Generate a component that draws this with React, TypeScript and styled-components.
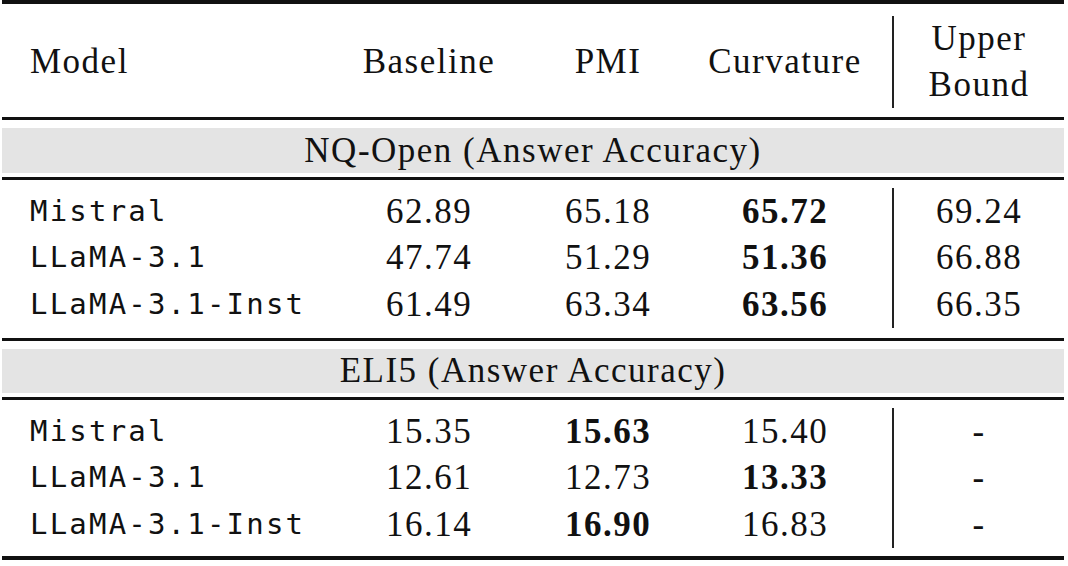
import React from "react";
import styled, { createGlobalStyle } from "styled-components";

const GlobalStyle = createGlobalStyle`
  html, body {
    margin: 0;
    padding: 0;
    background: #fff;
  }
  body {
    font-family: "Liberation Serif", "Times New Roman", serif;
    color: #111;
  }
`;

const columns = "318px 218px 140px 214px 172px";

type ResultRow = { model: string; values: string[]; best: number };

const groups: { title: string; bandHeight: number; padBottom: number; rows: ResultRow[] }[] = [
	{
		title: "NQ-Open (Answer Accuracy)",
		bandHeight: 45,
		padBottom: 10,
		rows: [
			{ model: "Mistral", values: ["62.89", "65.18", "65.72", "69.24"], best: 2 },
			{ model: "LLaMA-3.1", values: ["47.74", "51.29", "51.36", "66.88"], best: 2 },
			{ model: "LLaMA-3.1-Inst", values: ["61.49", "63.34", "63.56", "66.35"], best: 2 },
		],
	},
	{
		title: "ELI5 (Answer Accuracy)",
		bandHeight: 44,
		padBottom: 8,
		rows: [
			{ model: "Mistral", values: ["15.35", "15.63", "15.40", "-"], best: 1 },
			{ model: "LLaMA-3.1", values: ["12.61", "12.73", "13.33", "-"], best: 2 },
			{ model: "LLaMA-3.1-Inst", values: ["16.14", "16.90", "16.83", "-"], best: 1 },
		],
	},
];

export default function App() {
	return (
		<>
			<GlobalStyle />
			<Table>
				<Rule $weight={4} />
				<HeaderRow>
					<Cell $align="left">Model</Cell>
					<Cell>Baseline</Cell>
					<Cell>PMI</Cell>
					<Cell>Curvature</Cell>
					<Cell $divider>
						<Stack>
							<span>Upper</span>
							<span>Bound</span>
						</Stack>
					</Cell>
				</HeaderRow>
				<Rule $weight={3} />
				{groups.map((group, gi) => (
					<React.Fragment key={group.title}>
						<Band $height={group.bandHeight}>{group.title}</Band>
						<Rule $weight={3} />
						<Block $padBottom={group.padBottom}>
							{group.rows.map((row) => (
								<DataRow key={row.model}>
									<ModelName>{row.model}</ModelName>
									{row.values.map((v, i) => (
										<Cell key={i} $bold={i === row.best} $divider={i === 3}>
											{v}
										</Cell>
									))}
								</DataRow>
							))}
						</Block>
						<Rule $weight={gi === groups.length - 1 ? 4 : 3} />
					</React.Fragment>
				))}
			</Table>
		</>
	);
}

const Table = styled.div`
	width: 1062px;
	margin-left: 2px;
	font-size: 35px;
	letter-spacing: 1.5px;
`;

const Rule = styled.div<{ $weight: number }>`
	height: ${(p) => p.$weight}px;
	background: #111;
`;

const HeaderRow = styled.div`
	display: grid;
	grid-template-columns: ${columns};
	height: 92px;
	padding: 12px 0 9px;
`;

const Cell = styled.div<{ $align?: "left" | "center"; $bold?: boolean; $divider?: boolean }>`
	display: flex;
	align-items: center;
	justify-content: ${(p) => (p.$align === "left" ? "flex-start" : "center")};
	padding-left: ${(p) => (p.$align === "left" ? "28px" : "0")};
	font-weight: ${(p) => (p.$bold ? 700 : 400)};
	border-left: ${(p) => (p.$divider ? "2px solid #222" : "none")};
	white-space: nowrap;
`;

const Stack = styled.div`
	display: flex;
	flex-direction: column;
	align-items: center;
	line-height: 46px;
`;

const Band = styled.div<{ $height: number }>`
	height: ${(p) => p.$height}px;
	margin: 8px 0 4px;
	background: #e4e4e4;
	display: flex;
	align-items: center;
	justify-content: center;
`;

const Block = styled.div<{ $padBottom: number }>`
	padding: 8px 0 ${(p) => p.$padBottom}px;
`;

const DataRow = styled.div`
	display: grid;
	grid-template-columns: ${columns};
	height: 46.67px;
	line-height: 1;
`;

const ModelName = styled.div`
	display: flex;
	align-items: center;
	padding-left: 28px;
	font-family: "DejaVu Sans Mono", "Liberation Mono", monospace;
	font-size: 29px;
	letter-spacing: 2.2px;
	white-space: nowrap;
`;
